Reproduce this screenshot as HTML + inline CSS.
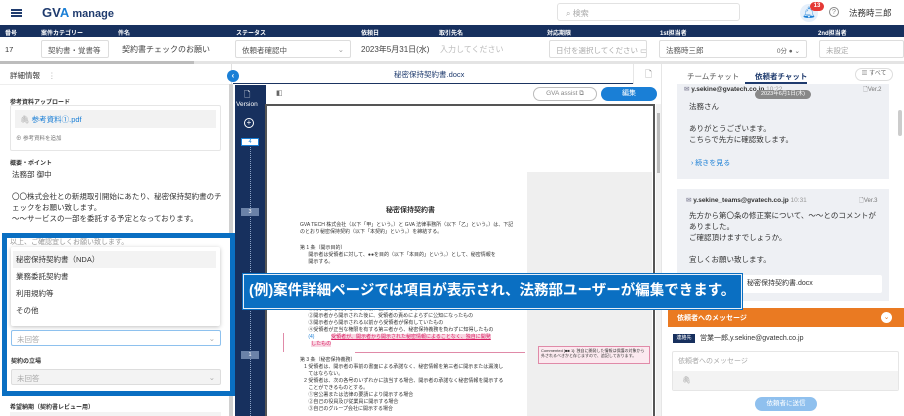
<!DOCTYPE html>
<html><head><meta charset="utf-8"><style>
*{box-sizing:border-box;margin:0;padding:0}
body{width:904px;height:416px;overflow:hidden;position:relative;background:#fff;font-family:"Liberation Sans","Noto Sans CJK JP",sans-serif;color:#333;font-size:8px}
.a{position:absolute}
.nav{background:#17305e;color:#fff;font-size:6px;font-weight:bold}
.inp{border:1px solid #ddd;border-radius:2px;background:#fff;font-size:7.5px;color:#555;padding:4px 6px;height:18px}
.doc p{font-size:5px;color:#333;line-height:7px;white-space:nowrap}
</style></head><body>
<div class="a" style="left:11px;top:9px;width:11px;height:2px;background:#1f3b6e;box-shadow:0 3px 0 #1f3b6e,0 6px 0 #1f3b6e"></div>
<div class="a" style="left:42px;top:5px;font-size:13px;font-weight:bold;color:#1f3b6e">GV<span style="color:#1a7fd6">A</span> <span style="font-weight:bold;font-size:11px">manage</span></div>
<div class="a" style="left:557px;top:3px;width:183px;height:18px;border:1px solid #e2e2e2;border-radius:3px;font-size:8px;color:#aaa;padding:4px 8px">⌕ 検索</div>
<div class="a" style="left:800px;top:4px;width:18px;height:18px;border-radius:9px;background:#e6f0fb;color:#1a7fd6;font-size:11px;text-align:center;line-height:18px">🔔︎</div>
<div class="a" style="left:810px;top:2px;width:14px;height:9px;border-radius:5px;background:#e53935;color:#fff;font-size:6px;font-weight:bold;text-align:center;line-height:9px">13</div>
<div class="a" style="left:829px;top:7px;width:10px;height:10px;border:1px solid #888;border-radius:50%;font-size:7px;text-align:center;line-height:9px;color:#888">?</div>
<div class="a" style="left:849px;top:7px;font-size:8.5px;color:#333">法務時三郎</div>
<div class="a nav" style="left:0;top:25px;width:904px;height:12px"></div>
<div class="a nav" style="left:5px;top:28px">番号</div>
<div class="a nav" style="left:41px;top:28px">案件カテゴリー</div>
<div class="a nav" style="left:118px;top:28px">件名</div>
<div class="a nav" style="left:236px;top:28px">ステータス</div>
<div class="a nav" style="left:361px;top:28px">依頼日</div>
<div class="a nav" style="left:439px;top:28px">取引先名</div>
<div class="a nav" style="left:547px;top:28px">対応期限</div>
<div class="a nav" style="left:660px;top:28px">1st担当者</div>
<div class="a nav" style="left:818px;top:28px">2nd担当者</div>
<div class="a" style="left:5px;top:45px;font-size:7.5px">17</div>
<div class="a inp" style="left:41px;top:40px;width:68px">契約書・覚書等 ⌄</div>
<div class="a" style="left:122px;top:44px;font-size:8px;color:#444">契約書チェックのお願い</div>
<div class="a inp" style="left:235px;top:40px;width:116px">依頼者確認中<span style="float:right;color:#999">⌄</span></div>
<div class="a" style="left:361px;top:44px;font-size:8px;color:#444">2023年5月31日(水)</div>
<div class="a" style="left:440px;top:44px;font-size:8px;color:#bbb">入力してください</div>
<div class="a inp" style="left:549px;top:40px;width:98px;color:#aaa;white-space:nowrap;overflow:hidden">日付を選択してください ▭</div>
<div class="a inp" style="left:659px;top:40px;width:148px">法務時三郎<span style="float:right;color:#666;font-size:6.5px">0分 ● ⌄</span></div>
<div class="a inp" style="left:819px;top:40px;width:85px;color:#aaa">未設定</div>
<div class="a" style="left:0;top:61px;width:904px;height:3px;background:#e4e4e4"></div>
<div class="a" style="left:0;top:61px;width:194px;height:3px;background:#bdbdbd"></div>
<div class="a" style="left:0;top:64px;width:232px;height:352px;background:#fff;border-right:1px solid #e0e0e0"></div>
<div class="a" style="left:229px;top:84px;width:4px;height:332px;background:#d0d0d0"></div>
<div class="a" style="left:10px;top:70px;font-size:7.5px;color:#333">詳細情報 <span style="color:#aaa;margin-left:6px">⋮</span></div>
<div class="a" style="left:0;top:84px;width:229px;height:1px;background:#eee"></div>
<div class="a" style="left:10px;top:97px;font-size:6px;font-weight:bold">参考資料アップロード</div>
<div class="a" style="left:10px;top:105px;width:211px;height:46px;border:1px solid #e6e6e6;border-radius:2px"></div>
<div class="a" style="left:15px;top:110px;width:201px;height:18px;background:#f2f2f2"></div>
<div class="a" style="left:20px;top:114px;font-size:7.5px;color:#1a7fd6"><span style="color:#aaa">🖇︎ </span>参考資料①.pdf</div>
<div class="a" style="left:16px;top:134px;font-size:5.5px;color:#777">⊕ 参考資料を追加</div>
<div class="a" style="left:10px;top:158px;font-size:6px;font-weight:bold">概要・ポイント</div>
<div class="a" style="left:12px;top:169px;font-size:7.5px">法務部 御中</div>
<div class="a" style="left:12px;top:191px;font-size:7.5px;line-height:11px;width:212px">〇〇株式会社との新規取引開始にあたり、秘密保持契約書のチェックをお願い致します。<br>〜〜サービスの一部を委託する予定となっております。</div>
<div class="a" style="left:2px;top:233px;width:233px;height:163px;border:5px solid #0a6fc2;background:#fff"></div>
<div class="a" style="left:10px;top:237px;font-size:7px;color:#999">以上、ご確認宜しくお願い致します。</div>
<div class="a" style="left:11px;top:247px;width:209px;height:79px;background:#fff;box-shadow:0 1px 4px rgba(0,0,0,.25);border-radius:2px"></div>
<div class="a" style="left:13px;top:251px;width:203px;height:17px;background:#f3f3f3"></div>
<div class="a" style="left:16px;top:254px;font-size:7.5px;color:#333">秘密保持契約書（NDA）</div>
<div class="a" style="left:16px;top:271px;font-size:7.5px;color:#333">業務委託契約書</div>
<div class="a" style="left:16px;top:288px;font-size:7.5px;color:#333">利用規約等</div>
<div class="a" style="left:16px;top:305px;font-size:7.5px;color:#333">その他</div>
<div class="a inp" style="left:11px;top:330px;width:210px;height:16px;border-color:#8ec1ee;color:#aaa;padding:3px 5px">未回答<span style="float:right">⌄</span></div>
<div class="a" style="left:11px;top:356px;font-size:6px;font-weight:bold">契約の立場</div>
<div class="a inp" style="left:11px;top:369px;width:210px;height:16px;background:#f3f3f3;color:#aaa;padding:3px 5px">未回答<span style="float:right">⌄</span></div>
<div class="a" style="left:10px;top:402px;font-size:6px;font-weight:bold">希望納期（契約書レビュー用）</div>
<div class="a" style="left:10px;top:412px;width:211px;height:4px;background:#f3f3f3"></div>
<div class="a" style="left:227px;top:70px;width:12px;height:12px;border-radius:6px;background:#1a7fd6;color:#fff;font-size:8px;text-align:center;line-height:11px;font-weight:bold">‹</div>
<div class="a" style="left:233px;top:64px;width:400px;height:20px;border-bottom:1px solid #1b3461"></div>
<div class="a" style="left:394px;top:69px;font-size:7.5px;color:#1f3b6e">秘密保持契約書.docx</div>
<div class="a" style="left:633px;top:64px;width:30px;height:20px;border-left:1px solid #e6e6e6;color:#888;text-align:center;font-size:9px;line-height:20px">🗋</div>
<div class="a" style="left:235px;top:85px;width:31px;height:331px;background:#17305e"></div>
<div class="a" style="left:244px;top:89px;color:#fff;font-size:8px">🗋</div>
<div class="a" style="left:236px;top:101px;color:#fff;font-size:6.5px">Version</div>
<div class="a" style="left:244px;top:118px;width:10px;height:10px;border:1.3px solid #fff;border-radius:50%;color:#fff;font-size:8px;line-height:7px;text-align:center">+</div>
<div class="a" style="left:250px;top:140px;width:0;height:276px;border-left:1px dotted #8ca3c6"></div>
<div class="a" style="left:241px;top:138px;width:18px;height:8px;background:#fff;border:1px solid #1a7fd6;color:#1a7fd6;font-size:5.5px;text-align:center;line-height:6px">4</div>
<div class="a" style="left:241px;top:208px;width:18px;height:8px;background:#6b82a8;color:#fff;font-size:5.5px;text-align:center;line-height:8px">3</div>
<div class="a" style="left:241px;top:351px;width:18px;height:8px;background:#6b82a8;color:#fff;font-size:5.5px;text-align:center;line-height:8px">1</div>
<div class="a" style="left:276px;top:89px;color:#666;font-size:7px">◧</div>
<div class="a" style="left:533px;top:87px;width:64px;height:14px;border:1px solid #bbb;border-radius:7px;font-size:6.5px;color:#888;text-align:center;line-height:12px">GVA assist ⧉</div>
<div class="a" style="left:601px;top:87px;width:56px;height:14px;background:#1a7fd6;border-radius:7px;color:#fff;font-size:7px;text-align:center;line-height:14px">編集</div>
<div class="a" style="left:265px;top:104px;width:390px;height:312px;border:2px solid #555;border-bottom:none;background:#fff"></div>
<div class="a" style="left:527px;top:172px;width:125px;height:244px;background:#efefef"></div>
<div class="a" style="left:656px;top:104px;width:5px;height:312px;background:#f2f2f2"></div>
<div class="a" style="left:657px;top:113px;width:3px;height:60px;background:#bbb"></div>
<div class="a doc" style="left:300px;top:205px">
<div style="font-size:7px;font-weight:bold;margin-left:86px;margin-bottom:7px">秘密保持契約書</div>
<p>GVA TECH 株式会社（以下「甲」という。）と GVA 法律事務所（以下「乙」という。）は、下記</p>
<p>のとおり秘密保持契約（以下「本契約」という。）を締結する。</p><br>
<p>第 1 条（開示目的）</p>
<p>&nbsp;&nbsp;&nbsp;&nbsp;&nbsp;&nbsp;開示者は受領者に対して、●●を目的（以下「本目的」という。）として、秘密情報を</p>
<p>&nbsp;&nbsp;&nbsp;&nbsp;&nbsp;&nbsp;開示する。</p>
</div>
<div class="a doc" style="left:300px;top:306px">
<p>&nbsp;&nbsp;&nbsp;&nbsp;&nbsp;&nbsp;①開示者から開示される以前に公知であったもの</p>
<p>&nbsp;&nbsp;&nbsp;&nbsp;&nbsp;&nbsp;②開示者から開示された後に、受領者の責めによらずに公知になったもの</p>
<p>&nbsp;&nbsp;&nbsp;&nbsp;&nbsp;&nbsp;③開示者から開示される以前から受領者が保有していたもの</p>
<p>&nbsp;&nbsp;&nbsp;&nbsp;&nbsp;&nbsp;④受領者が正当な権限を有する第三者から、秘密保持義務を負わずに知得したもの</p>
<p>&nbsp;&nbsp;&nbsp;&nbsp;&nbsp;&nbsp;<span style="color:#1a7fd6">(4)</span>&nbsp;&nbsp;&nbsp;&nbsp;&nbsp;&nbsp;&nbsp;&nbsp;&nbsp;&nbsp;&nbsp;&nbsp;<span style="color:#d81b60;background:#f9d6e2;text-decoration:underline">受領者が、開示者から開示された秘密情報によることなく、独自に開発</span></p>
<p>&nbsp;&nbsp;&nbsp;&nbsp;&nbsp;&nbsp;&nbsp;&nbsp;<span style="color:#d81b60;background:#f9d6e2">したもの</span></p><br>
<p>第 3 条（秘密保持義務）</p>
<p>&nbsp;&nbsp;&nbsp;1 受領者は、開示者の事前の書面による承諾なく、秘密情報を第三者に開示または漏洩し</p>
<p>&nbsp;&nbsp;&nbsp;&nbsp;&nbsp;&nbsp;てはならない。</p>
<p>&nbsp;&nbsp;&nbsp;2 受領者は、次の各号のいずれかに該当する場合、開示者の承諾なく秘密情報を開示する</p>
<p>&nbsp;&nbsp;&nbsp;&nbsp;&nbsp;&nbsp;ことができるものとする。</p>
<p>&nbsp;&nbsp;&nbsp;&nbsp;&nbsp;&nbsp;①官公署または法律の要請により開示する場合</p>
<p>&nbsp;&nbsp;&nbsp;&nbsp;&nbsp;&nbsp;②自己の役員及び従業員に開示する場合</p>
<p>&nbsp;&nbsp;&nbsp;&nbsp;&nbsp;&nbsp;③自己のグループ会社に開示する場合</p>
</div>
<div class="a" style="left:283px;top:333px;width:1px;height:19px;background:#e08aa8"></div>
<div class="a" style="left:355px;top:352px;width:170px;height:1px;background:#e08aa8"></div>
<div class="a" style="left:538px;top:346px;width:112px;height:18px;border:1px solid #e08aa8;background:#fbe9ef;font-size:4px;line-height:5px;padding:1px 2px;color:#333">Commented [■■ 1]: 独自に開発した情報は保護の対象から外されるべきかと存じますので、追記しております。</div>
<div class="a" style="left:661px;top:64px;width:243px;height:352px;border-left:1px solid #e6e6e6;background:#fff"></div>
<div class="a" style="left:687px;top:71px;font-size:7.5px;color:#555">チームチャット</div>
<div class="a" style="left:755px;top:71px;font-size:7.5px;color:#1f3b6e;font-weight:bold">依頼者チャット</div>
<div class="a" style="left:745px;top:82px;width:62px;height:2px;background:#1f3b6e"></div>
<div class="a" style="left:855px;top:68px;width:38px;height:13px;border:1px solid #ddd;border-radius:7px;font-size:6px;color:#666;text-align:center;line-height:11px">▥ すべて</div>
<div class="a" style="left:677px;top:84px;width:212px;height:95px;background:#eef0f4"></div>
<div class="a" style="left:684px;top:85px;font-size:6.5px;color:#333;font-weight:bold"><span style="color:#99a">✉</span> y.sekine@gvatech.co.jp <span style="font-weight:normal;color:#999">10:22</span></div>
<div class="a" style="left:863px;top:85px;font-size:6px;color:#777">🗋Ver.2</div>
<div class="a" style="left:755px;top:90px;width:56px;height:9px;border-radius:5px;background:#888;color:#fff;font-size:5.5px;text-align:center;line-height:9px">2023年6月1日(木)</div>
<div class="a" style="left:689px;top:101px;font-size:7.5px;line-height:11px">法務さん<br><br>ありがとうございます。<br>こちらで先方に確認致します。</div>
<div class="a" style="left:691px;top:158px;font-size:7px;color:#1a7fd6">› 続きを見る</div>
<div class="a" style="left:677px;top:189px;width:212px;height:112px;background:#eef0f4"></div>
<div class="a" style="left:686px;top:196px;font-size:6.5px;font-weight:bold"><span style="color:#99a">✉</span> y.sekine_teams@gvatech.co.jp <span style="font-weight:normal;color:#999">10:31</span></div>
<div class="a" style="left:859px;top:196px;font-size:6px;color:#777">🗋Ver.3</div>
<div class="a" style="left:689px;top:210px;font-size:7.5px;line-height:11px;width:190px">先方から第〇条の修正案について、〜〜とのコメントがありました。<br>ご確認頂けますでしょうか。<br><br>宜しくお願い致します。</div>
<div class="a" style="left:687px;top:275px;width:195px;height:18px;background:#fff;border-radius:2px;font-size:7px;line-height:18px;padding-left:60px">秘密保持契約書.docx</div>
<div class="a" style="left:898px;top:110px;width:4px;height:26px;background:#ccc;border-radius:2px"></div>
<div class="a" style="left:668px;top:308px;width:236px;height:19px;background:#ea7a22"></div>
<div class="a" style="left:677px;top:313px;font-size:7px;color:#fff;font-weight:bold">依頼者へのメッセージ</div>
<div class="a" style="left:881px;top:312px;width:11px;height:11px;border-radius:50%;background:#fff;color:#ea7a22;font-size:7px;text-align:center;line-height:11px">⌄</div>
<div class="a" style="left:673px;top:334px;width:22px;height:9px;background:#17305e;color:#fff;font-size:5px;text-align:center;line-height:9px">連絡先</div>
<div class="a" style="left:700px;top:333px;font-size:7px">営業一郎,y.sekine@gvatech.co.jp</div>
<div class="a" style="left:672px;top:351px;width:227px;height:40px;border:1px solid #e6e6e6;border-radius:2px"></div>
<div class="a" style="left:673px;top:371px;width:225px;height:19px;background:#f3f3f3"></div>
<div class="a" style="left:678px;top:356px;font-size:7px;color:#aaa">依頼者へのメッセージ</div>
<div class="a" style="left:682px;top:376px;font-size:7px;color:#aaa">🖇︎</div>
<div class="a" style="left:755px;top:397px;width:62px;height:14px;border-radius:7px;background:#8fc0ee;color:#fff;font-size:6.5px;text-align:center;line-height:14px">依頼者に送信</div>
<div class="a" style="left:243px;top:274px;width:499px;height:35px;background:#0a6fc2;border:1px solid #e6eef7;box-shadow:0 0 0 1px #0a6fc2;color:#fff;font-size:14.5px;font-weight:bold;line-height:33px;padding-left:5px;white-space:nowrap;overflow:hidden">(例)案件詳細ページでは項目が表示され、法務部ユーザーが編集できます。</div>
</body></html>
